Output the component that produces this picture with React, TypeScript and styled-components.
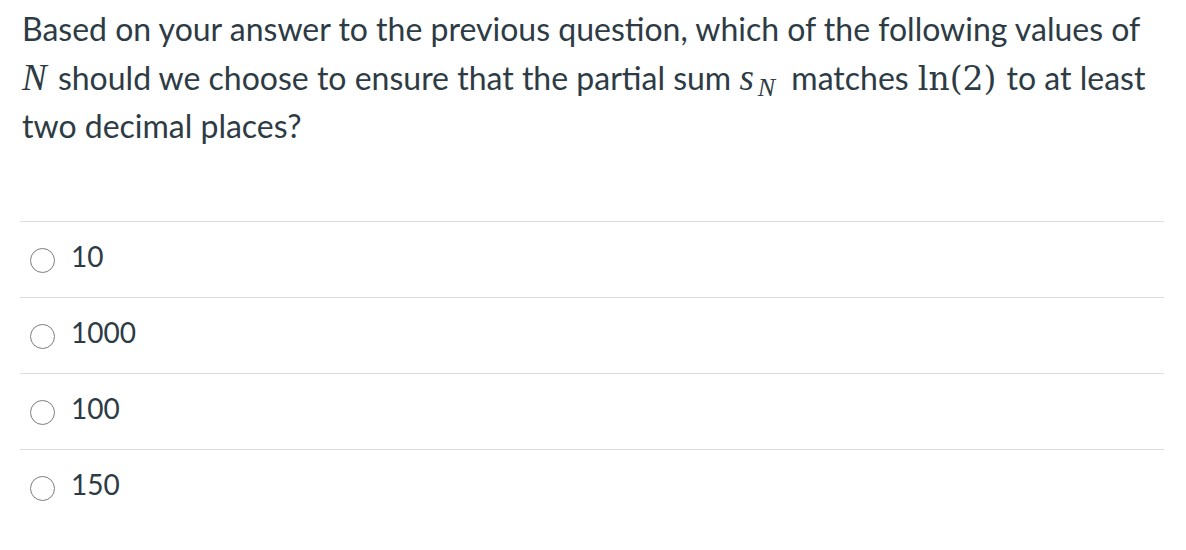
import React from "react";
import styled, { createGlobalStyle } from "styled-components";

const GlobalStyle = createGlobalStyle`
    html, body {
        margin: 0;
        padding: 0;
        background: #fff;
    }
    body {
        font-family: Lato, "Noto Sans", sans-serif;
        color: #2d3b45;
    }
`;

const QUIZ_WRAPPER = styled.div`
    padding: 5px 22px 0 20px;
`;
QUIZ_WRAPPER.displayName = "QUIZ_WRAPPER";

const QUESTION = styled.p`
    margin: 0 0 70px 2px;
    font-size: 32px;
    line-height: 48.5px;
    .var {
        font-style: italic;
        font-family: "Liberation Serif", serif;
        font-size: 37px;
        line-height: 0;
        margin-right: 3px;
    }
    .sub {
        font-size: 26px;
        font-style: italic;
        font-family: "Liberation Serif", serif;
        vertical-align: -6px;
        line-height: 0;
        margin: 0 8px 0 1px;
    }
    .fn {
        font-family: "DejaVu Serif", "Liberation Serif", serif;
        font-size: 33px;
        line-height: 0;
        margin: 0 2px 0 1px;
    }
`;
QUESTION.displayName = "QUESTION";

const ANSWERS = styled.div`
    display: flex;
    flex-direction: column;
`;
ANSWERS.displayName = "ANSWERS";

const ANSWER = styled.label`
    display: flex;
    align-items: center;
    height: 75px;
    border-top: 1px solid #dcdcdc;
    padding-left: 10px;
    gap: 16px;
    font-size: 28px;
    cursor: pointer;
`;
ANSWER.displayName = "ANSWER";

const RADIO = styled.span`
    width: 25px;
    height: 25px;
    border-radius: 50%;
    border: 1.5px solid #7d7d7d;
    box-sizing: border-box;
    flex-shrink: 0;
    margin-top: 2px;
`;
RADIO.displayName = "RADIO";

const ANSWER_TEXT = styled.span`
    line-height: 1;
    margin-top: -6px;
`;
ANSWER_TEXT.displayName = "ANSWER_TEXT";

const answers = ["10", "1000", "100", "150"];

export default function App() {
    return (
        <>
            <GlobalStyle />
            <QUIZ_WRAPPER>
                <QUESTION>
                    Based on your answer to the previous question, which of the following values of{" "}
                    <span className="var">N</span> should we choose to ensure that the partial sum{" "}
                    <span className="var">s</span>
                    <span className="sub">N</span> matches{" "}
                    <span className="fn">ln(2)</span> to at least two decimal places?
                </QUESTION>
                <ANSWERS>
                    {answers.map((a) => (
                        <ANSWER key={a}>
                            <RADIO />
                            <ANSWER_TEXT>{a}</ANSWER_TEXT>
                        </ANSWER>
                    ))}
                </ANSWERS>
            </QUIZ_WRAPPER>
        </>
    );
}
